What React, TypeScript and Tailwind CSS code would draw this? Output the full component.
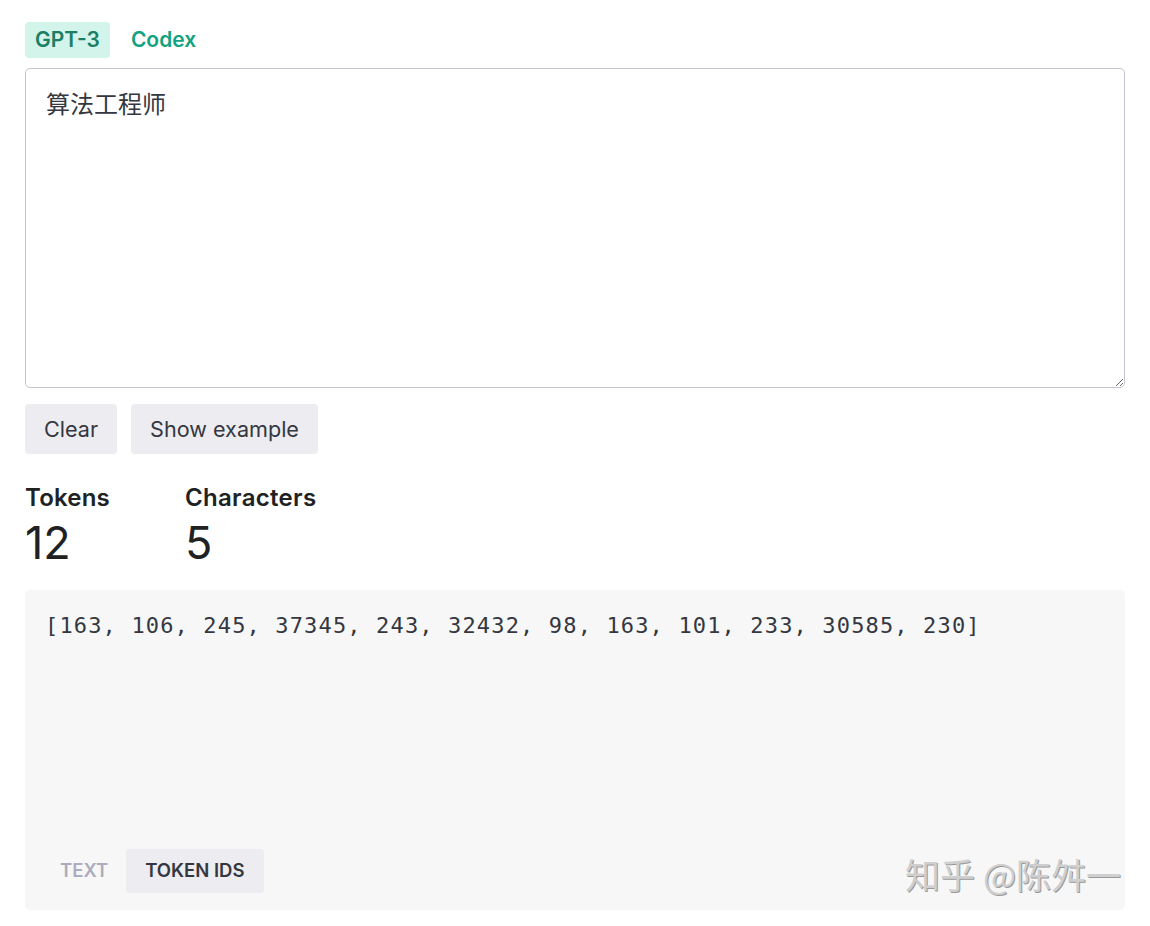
import React from "react";

const ids = [163, 106, 245, 37345, 243, 32432, 98, 163, 101, 233, 30585, 230];

export default function App() {
    return (
        <div
            className="min-h-[926px] w-[1150px] bg-white px-[25px] pt-[22px] text-[#353740]"
            style={{ fontFamily: 'Inter, "Noto Sans", "Noto Sans CJK SC", sans-serif' }}
        >
            {/* Model tabs */}
            <div className="flex items-center gap-[11px]">
                <button className="h-[36px] rounded-[4px] bg-[#d2f4ea] px-[10px] text-[21px] font-semibold text-[#1a7f64]">
                    GPT-3
                </button>
                <button className="h-[36px] px-[10px] text-[21px] font-semibold text-[#10a37f]">
                    Codex
                </button>
            </div>

            {/* Input */}
            <textarea
                className="mt-[10px] block h-[320px] w-full rounded-[5px] border border-[#c5c5d2] px-[20px] py-[20px] text-[24px] leading-[32px] text-[#353740] outline-none"
                style={{ fontFamily: 'Inter, "Noto Sans CJK SC", sans-serif' }}
                defaultValue="算法工程师"
            />

            <div className="mt-[16px] flex gap-[14px]">
                <button className="h-[50px] rounded-[4px] bg-[#ececf1] px-[19px] text-[21.6px] text-[#353740]">
                    Clear
                </button>
                <button className="h-[50px] rounded-[4px] bg-[#ececf1] px-[19px] text-[21.6px] text-[#353740]">
                    Show example
                </button>
            </div>

            {/* Stats */}
            <div className="mt-[28px] flex text-[#202123]">
                <div className="w-[160px]">
                    <div className="text-[24px] font-semibold leading-[32px] tracking-[0.2px]">Tokens</div>
                    <div className="text-[45px] leading-[58px]">12</div>
                </div>
                <div>
                    <div className="text-[24px] font-semibold leading-[32px] tracking-[0.3px]">Characters</div>
                    <div className="text-[45px] leading-[58px]">5</div>
                </div>
            </div>

            {/* Output */}
            <div className="relative mt-[18px] flex h-[320px] flex-col rounded-[5px] bg-[#f7f7f8] px-[20px] pt-[20px] pb-[17px]">
                <div
                    className="text-[22px] leading-[32px] tracking-[1.15px] text-[#353740]"
                    style={{ fontFamily: '"DejaVu Sans Mono", "Liberation Mono", monospace' }}
                >
                    [{ids.join(", ")}]
                </div>
                <div className="mt-auto flex items-center pl-[15px]">
                    <span className="mr-[18px] text-[18.5px] font-semibold uppercase text-[#acacbe]">Text</span>
                    <span className="flex h-[44px] items-center rounded-[4px] bg-[#ececf1] px-[19px] text-[18.5px] font-semibold uppercase text-[#353740]">
                        Token IDs
                    </span>
                </div>
                <span
                    className="absolute right-[4px] bottom-[10px] text-[35px] text-[#cfcfcf]"
                    style={{ fontFamily: '"Noto Sans CJK SC", sans-serif', textShadow: "1px 1px 0 #999999" }}
                >
                    知乎 @陈舛一
                </span>
            </div>
        </div>
    );
}
